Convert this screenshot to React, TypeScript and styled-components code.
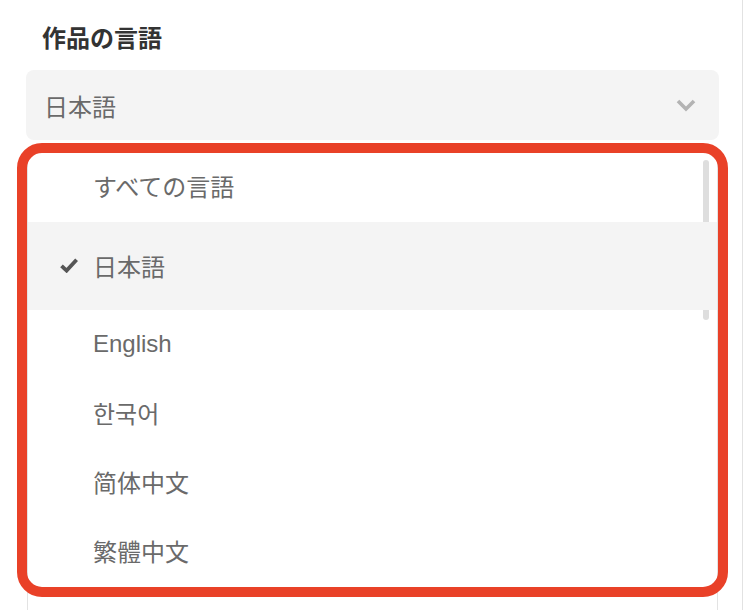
import React from "react";
import styled, { createGlobalStyle } from "styled-components";

const GlobalStyle = createGlobalStyle`
  html, body {
    margin: 0;
    padding: 0;
    background: #fff;
    overflow: hidden;
  }
  body {
    font-family: "Liberation Sans", "Noto Sans CJK JP", sans-serif;
  }
`;

const languages = [
  { label: "すべての言語", value: "all" },
  { label: "日本語", value: "ja" },
  { label: "English", value: "en" },
  { label: "한국어", value: "ko" },
  { label: "简体中文", value: "zh-cn" },
  { label: "繁體中文", value: "zh-tw" },
];

export default function App() {
  const selected = "ja";

  return (
    <Page>
      <GlobalStyle />
      <Section>
        <Title>作品の言語</Title>
        <SelectBox>
          <SelectValue>日本語</SelectValue>
          <Chevron width="20" height="13" viewBox="0 0 20 13">
            <polyline points="2,2 10,10 18,2" />
          </Chevron>
        </SelectBox>
        <Panel>
          <Scrollbar />
          {languages.map((lang, i) => (
            <Option key={lang.value} $first={i === 0} $active={lang.value === selected}>
              {lang.value === selected && (
                <Check width="18" height="15" viewBox="0 0 18 15">
                  <path d="M1.5 7.8 L6.6 12.6 L16.6 1.8" />
                </Check>
              )}
              <OptionLabel>{lang.label}</OptionLabel>
            </Option>
          ))}
        </Panel>
        <Highlight />
      </Section>
    </Page>
  );
}

const Page = styled.div`
  width: 743px;
  min-height: 100vh;
  border-right: 1px solid #e2e2e2;
  box-sizing: border-box;
`;

const Section = styled.div`
  position: relative;
  padding: 24px 23px 0 26px;
`;

const Title = styled.h2`
  margin: 0 0 16px 16px;
  font-size: 24px;
  line-height: 30px;
  font-weight: 700;
  color: #333;
`;

const SelectBox = styled.div`
  display: flex;
  align-items: center;
  justify-content: space-between;
  height: 70px;
  padding: 0 23px 0 18px;
  background: #f4f4f4;
  border-radius: 8px;
  box-sizing: border-box;
`;

const SelectValue = styled.span`
  font-size: 24px;
  color: #6a6a6a;
`;

const Chevron = styled.svg`
  fill: none;
  stroke: #b3b3b3;
  stroke-width: 3.6;
`;

const Panel = styled.ul`
  position: relative;
  list-style: none;
  margin: 6px 1px 0 1px;
  padding: 3px 0 60px;
  border: 1px solid #e3e3e3;
  border-radius: 6px;
  background: #fff;
`;

const Scrollbar = styled.li`
  position: absolute;
  top: 13px;
  right: 8px;
  width: 6px;
  height: 160px;
  border-radius: 3px;
  background: #dedede;
`;

const Option = styled.li<{ $first?: boolean; $active?: boolean }>`
  position: relative;
  display: flex;
  align-items: center;
  height: ${(p) => (p.$first ? 72 : p.$active ? 88 : 69)}px;
  padding-left: 65px;
  background: ${(p) => (p.$active ? "#f4f4f4" : "transparent")};
`;

const OptionLabel = styled.span`
  font-size: 24px;
  color: #6a6a6a;
  margin-top: -2px;
`;

const Check = styled.svg`
  position: absolute;
  left: 32px;
  top: 50%;
  margin-top: -8px;
  fill: none;
  stroke: #555;
  stroke-width: 3.8;
`;

const Highlight = styled.div`
  position: absolute;
  left: 17px;
  top: 143px;
  width: 711px;
  height: 454px;
  border: 10px solid #e94128;
  border-radius: 25px;
  box-sizing: border-box;
  pointer-events: none;
`;
